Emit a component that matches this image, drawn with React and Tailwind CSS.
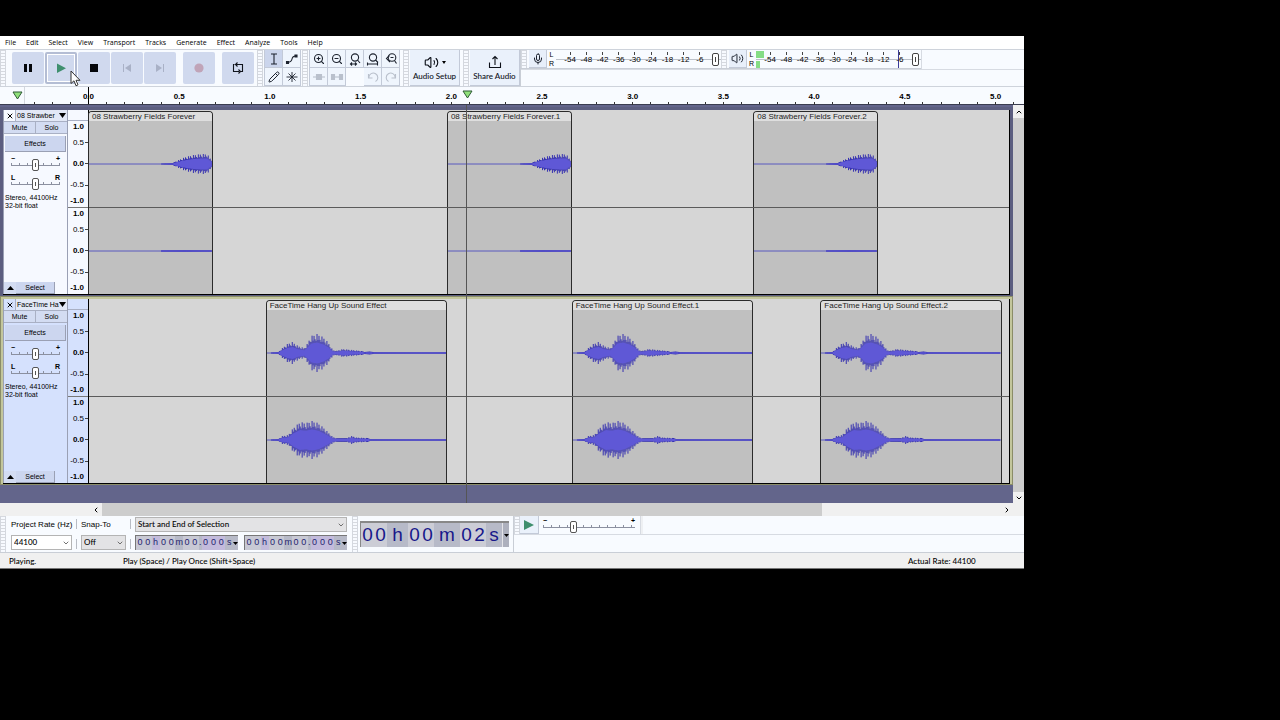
import {
	ChevronDown,
	ChevronLeft,
	ChevronRight,
	ChevronUp,
	Mic,
	Pencil,
	Volume2,
	X,
	ZoomIn,
	ZoomOut,
} from 'lucide-react';
import clsx from 'clsx';

const VIEW_SECONDS = 5.075;
const PLAYHEAD = 2.08;
const HUMANIST = "font-['Lato',sans-serif] font-medium";

const MENUS = [
	'File',
	'Edit',
	'Select',
	'View',
	'Transport',
	'Tracks',
	'Generate',
	'Effect',
	'Analyze',
	'Tools',
	'Help',
];

const DECIBELS = [ -54, -48, -42, -36, -30, -24, -18, -12, -6 ];

// Envelopes are [ x, half height ] pairs in clip pixels.
const SWELL = [ [ 73, 0.5 ], [ 84, 1 ], [ 90, 4 ], [ 97, 7 ], [ 105, 9 ], [ 113, 10 ], [ 119, 10 ], [ 121, 7 ], [ 124, 3 ] ];
const FLAT = [ [ 73, 0.8 ], [ 124, 0.8 ] ];
const HANGUP_LEFT = [
	[ 4, 0.5 ], [ 11, 1 ], [ 15, 5 ], [ 20, 9 ], [ 25, 11 ], [ 31, 7 ], [ 37, 5 ], [ 40, 9 ],
	[ 44, 17 ], [ 50, 19 ], [ 56, 16 ], [ 61, 11 ], [ 66, 3 ], [ 69, 2 ], [ 76, 4 ], [ 86, 3 ],
	[ 95, 2 ], [ 98, 1 ], [ 103, 1.5 ], [ 108, 0.8 ], [ 181, 0.8 ],
];
const HANGUP_RIGHT = [
	[ 4, 0.5 ], [ 11, 1 ], [ 15, 4 ], [ 21, 5 ], [ 26, 12 ], [ 33, 18 ], [ 39, 17 ], [ 45, 19 ],
	[ 51, 17 ], [ 57, 12 ], [ 62, 7 ], [ 66, 3 ], [ 70, 2 ], [ 80, 2 ], [ 85, 4 ], [ 90, 2.5 ],
	[ 101, 2 ], [ 104, 0.8 ], [ 181, 0.8 ],
];

const TRACKS = [
	{
		name: '08 Strawber',
		title: '08 Strawberry Fields Forever',
		starts: [ 0, 1.98, 3.67 ],
		length: 0.688,
		pixels: 124,
		waves: [ SWELL, FLAT ],
	},
	{
		name: 'FaceTime Ha',
		title: 'FaceTime Hang Up Sound Effect',
		starts: [ 0.98, 2.668, 4.04 ],
		length: 1,
		pixels: 181,
		waves: [ HANGUP_LEFT, HANGUP_RIGHT ],
		focused: true,
	},
];

const percent = ( seconds ) => `${ ( seconds / VIEW_SECONDS ) * 100 }%`;

const envelopeAt = ( points, x ) => {
	const next = points.findIndex( ( point ) => point[ 0 ] >= x );
	if ( next < 1 ) {
		return next === 0 && points[ 0 ][ 0 ] === x ? points[ 0 ][ 1 ] : 0;
	}
	const [ x0, y0 ] = points[ next - 1 ];
	const [ x1, y1 ] = points[ next ];
	return y0 + ( ( y1 - y0 ) * ( x - x0 ) ) / ( x1 - x0 );
};

const wavePath = ( points, pixels, scale, spiky ) => {
	let d = '';
	for ( let x = 0; x < pixels; x++ ) {
		const base = envelopeAt( points, x ) * scale;
		const dip = spiky && base > 2 ? [ 1, 0.7, 0.95, 0.75, 0.65 ][ x % 5 ] : 1;
		const dipLow = spiky && base > 2 ? [ 0.65, 1, 0.7, 0.9, 0.75 ][ ( x + 1 ) % 5 ] : 1;
		d += `M${ x + 0.5 } ${ 43 - base * dip }V${ 43 + base * dipLow }`;
	}
	return d;
};

const Wave = ( { points, pixels } ) => (
	<svg
		className="block h-full w-full"
		viewBox={ `0 0 ${ pixels } 86` }
		preserveAspectRatio="none"
		aria-hidden="true"
	>
		<path d={ `M0 43H${ pixels }` } stroke="#5a5ac0" strokeWidth="1" />
		<path d={ wavePath( points, pixels, 1, true ) } stroke="#342fb0" strokeWidth="1" />
		<path d={ wavePath( points, pixels, 0.55, false ) } stroke="#5f58d6" strokeWidth="1.2" />
	</svg>
);

const Grip = () => (
	<div className="w-[6px] shrink-0 self-stretch border-x border-[#d3d7de] bg-[repeating-linear-gradient(#d6d9df_0_1px,#f7faff_1px_3px)]" />
);

const TransportButton = ( { label, pressed, children } ) => (
	<button
		type="button"
		aria-label={ label }
		className={ clsx(
			'flex h-8 w-8 items-center justify-center rounded-xs bg-[#d0d9ee]',
			pressed && 'border-2 border-[#b4bdd4] ring-1 ring-inset ring-white'
		) }
	>
		<svg viewBox="0 0 16 16" className="h-4 w-4 shrink-0" aria-hidden="true">
			{ children }
		</svg>
	</button>
);

const ToolButton = ( { label, active, blank, children } ) => (
	<button
		type="button"
		aria-label={ label }
		className={ clsx(
			'flex h-[18px] w-[18px] items-center justify-center border-r border-b border-[#c3cad8]',
			active ? 'bg-[#cbd5ec]' : 'bg-[#eff5fd]',
			blank ? 'text-[#b9c0cc]' : 'text-[#1c222e]'
		) }
	>
		{ children }
	</button>
);

const Glyph = ( { children } ) => (
	<svg
		viewBox="0 0 14 14"
		className="h-[14px] w-[14px] shrink-0"
		fill="none"
		stroke="currentColor"
		strokeWidth="1.1"
		aria-hidden="true"
	>
		{ children }
	</svg>
);

const Transport = () => (
	<div className="flex items-center gap-px pr-[2px] pl-[6px]">
		<TransportButton label="Pause">
			<path d="M4 4h3v8H4zM9 4h3v8H9z" fill="#05070b" />
		</TransportButton>
		<TransportButton label="Play" pressed>
			<path d="M4 3.5L13 8.2L4 13z" fill="#3f8f6e" />
		</TransportButton>
		<TransportButton label="Stop">
			<path d="M4 4h8v8H4z" fill="#05070b" />
		</TransportButton>
		<TransportButton label="Skip to Start">
			<path d="M4 4h1v8H4zM12 4v8L6 8z" fill="#a9b1c6" />
		</TransportButton>
		<TransportButton label="Skip to End">
			<path d="M4 4l6 4-6 4zM11 4h1v8h-1z" fill="#a9b1c6" />
		</TransportButton>
		<div className="px-[6px]">
			<TransportButton label="Record">
				<circle cx="8" cy="8" r="4.6" fill="#c0a4b8" />
			</TransportButton>
		</div>
		<TransportButton label="Loop">
			<g fill="none" stroke="#10141c" strokeWidth="1.1">
				<path d="M5.5 4.5H12.5V11.5H10.5M9.5 11.5H3.5V4.5H4.5" />
				<path d="M7.500 2.500L5.500 4.500L7.500 6.500M8.500 9.500L10.500 11.500L8.500 13.500" />
			</g>
		</TransportButton>
	</div>
);

const EditTools = () => (
	<div className="grid grid-cols-2 self-start border-l border-[#c3cad8]">
		<ToolButton label="Selection Tool" active>
			<Glyph><path d="M4 2h6M4 12h6M7 2v10" /></Glyph>
		</ToolButton>
		<ToolButton label="Envelope Tool">
			<Glyph>
				<path d="M2.5 10.5Q6.5 10 7 7t4-3" />
				<path d="M1.5 9.5h2v2h-2zM10 3h2v2h-2z" fill="currentColor" />
			</Glyph>
		</ToolButton>
		<ToolButton label="Draw Tool">
			<Pencil size={ 12 } strokeWidth={ 2 } />
		</ToolButton>
		<ToolButton label="Multi-Tool">
			<Glyph><path d="M7 2v10M1.5 7h11M3.5 3.5l7 7M10.5 3.5l-7 7" strokeWidth="0.9" /></Glyph>
		</ToolButton>
	</div>
);

const ZoomTools = () => (
	<div className="grid grid-cols-5 self-start border-l border-[#c3cad8]">
		<ToolButton label="Zoom In"><ZoomIn size={ 12 } strokeWidth={ 2.2 } /></ToolButton>
		<ToolButton label="Zoom Out"><ZoomOut size={ 12 } strokeWidth={ 2.2 } /></ToolButton>
		<ToolButton label="Fit Selection to Width">
			<Glyph>
				<circle cx="7" cy="5.5" r="3.6" />
				<path d="M9.5 8l2.5 3M2.5 12h6M4 10.5L2.5 12l1.500 1.500M7 10.500l1.500 1.500-1.500 1.500" />
			</Glyph>
		</ToolButton>
		<ToolButton label="Fit Project to Width">
			<Glyph>
				<circle cx="7" cy="5.5" r="3.6" />
				<path d="M9.5 8l2.5 2.5M1.5 12h10M1.5 10.5v3M11.5 10.5v3" />
			</Glyph>
		</ToolButton>
		<ToolButton label="Zoom Toggle">
			<Glyph>
				<circle cx="8" cy="5.5" r="3.8" />
				<path d="M10.5 8.5l2 3M5.5 3.5L2.500 6.500l3.500 3.500M6.500 5.500h3" />
			</Glyph>
		</ToolButton>
		<ToolButton label="Trim Audio" blank>
			<Glyph><path d="M1 7h12" /><path d="M4.5 4.5h5v5h-5z" fill="currentColor" /></Glyph>
		</ToolButton>
		<ToolButton label="Silence Audio" blank>
			<Glyph><path d="M1.5 4.5h3v5h-3zM9.5 4.5h3v5h-3z" fill="currentColor" /><path d="M4 7h6" /></Glyph>
		</ToolButton>
		<div />
		<ToolButton label="Undo" blank>
			<Glyph><path d="M2.5 4v4h4M2.8 7.5A4.5 4.5 0 1 1 9.5 11.5" /></Glyph>
		</ToolButton>
		<ToolButton label="Redo" blank>
			<Glyph><path d="M11.5 4v4h-4M11.2 7.5A4.5 4.5 0 1 0 4.5 11.5" /></Glyph>
		</ToolButton>
	</div>
);

const BigButton = ( { label, children } ) => (
	<button
		type="button"
		className={ clsx(
			'flex w-[50px] flex-col items-center justify-between border-r border-b border-[#c3cad8] bg-[#eaf1fb] pt-[5px] pb-[4px] text-[8px] leading-[10px] whitespace-nowrap text-[#0c1018]',
			HUMANIST
		) }
	>
		<span className="flex h-[14px] items-center gap-[3px]">{ children }</span>
		{ label }
	</button>
);

const Meter = ( { label, icon, playing } ) => (
	<div className="flex h-[19px] w-[200px] items-stretch border-b border-[#c9ced6]">
		<Grip />
		<button
			type="button"
			aria-label={ label }
			className="ml-[2px] flex w-[18px] items-center justify-center border-r border-b border-[#c3cad8] bg-[#e8effa] text-[#1c222e]"
		>
			{ icon }
		</button>
		<div className="flex w-[9px] flex-col items-center justify-between text-[7px] leading-[9px]">
			<span>L</span>
			<span>R</span>
		</div>
		<div className="relative flex flex-1 items-center">
			<div className="absolute inset-x-0 top-[9px] h-px bg-[#bcc1c9]" />
			{ playing && (
				<>
					<div className="absolute top-px left-0 h-[7px] w-[8px] bg-[#85dd85]" />
					<div className="absolute top-[11px] left-0 h-[7px] w-[4px] bg-[#85dd85]" />
					<div className="absolute inset-y-0 right-[22px] w-px bg-[#3b3b98]" />
				</>
			) }
			<div className="relative ml-[6px] flex w-[146px] text-[8px] leading-[9px]">
				{ DECIBELS.map( ( db ) => (
					<span key={ db } className="flex w-0 flex-1 flex-col items-center">
						<span className="h-[3px] w-px bg-[#444]" />
						<span>{ db }</span>
						<span className="h-[3px]" />
					</span>
				) ) }
			</div>
			<span className="relative ml-[4px] h-[13px] w-[7px] rounded-xs border border-[#444] bg-white">
				<span className="absolute top-[3px] left-[2px] h-[5px] w-px bg-[#444]" />
			</span>
		</div>
	</div>
);

const Toolbar = () => (
	<div className="flex h-[38px] items-stretch border-y border-[#ced3db]">
		<Grip />
		<Transport />
		<div className="flex gap-px pl-px">
			<Grip />
			<EditTools />
		</div>
		<div className="flex gap-px pl-px">
			<Grip />
			<ZoomTools />
		</div>
		<div className="flex gap-px pl-[3px]">
			<Grip />
			<BigButton label="Audio Setup">
				<Volume2 size={ 15 } strokeWidth={ 1.8 } />
				<svg viewBox="0 0 4 3" className="h-[3px] w-[4px]" aria-hidden="true"><path d="M0 0h4L2 3z" /></svg>
			</BigButton>
		</div>
		<div className="flex gap-px pl-[3px]">
			<Grip />
			<BigButton label="Share Audio">
				<Glyph><path d="M1.5 7.5v5h11v-5M7 10V1.5M4.5 4L7 1.5L9.5 4" /></Glyph>
			</BigButton>
		</div>
		<div className="flex min-w-0 flex-1 flex-col border-l border-[#c9ced6]">
			<div className="flex border-b border-[#d7dbe2]">
				<Meter label="Record Meter" icon={ <Mic size={ 12 } strokeWidth={ 2 } /> } />
				<Meter label="Playback Meter" icon={ <Volume2 size={ 13 } strokeWidth={ 1.8 } /> } playing />
				<div className="border-l border-[#d7dbe2]" />
			</div>
		</div>
	</div>
);

const GreenMarker = () => (
	<svg viewBox="0 0 11 9" className="h-[9px] w-[11px] shrink-0" aria-hidden="true">
		<path d="M1 1h9L5.5 8z" fill="#8fe07a" stroke="#2f5a36" />
	</svg>
);

const Timeline = () => (
	<div className="relative flex h-[18px] border-b border-[#3a3c50] pr-px">
		<button
			type="button"
			aria-label="Pinned Play Head"
			className="flex w-[25px] items-center justify-center border-r border-[#d3d7de] pl-[10px]"
		>
			<GreenMarker />
		</button>
		{ Array.from( { length: 55 }, ( _, i ) => i - 3 ).map( ( tenth ) => {
			const major = tenth >= 0 && tenth % 5 === 0;
			return (
				<div
					key={ tenth }
					className="relative flex w-0 flex-1 flex-col items-center justify-between pt-[5px] text-[8px] leading-[10px] font-bold whitespace-nowrap"
				>
					<span>{ major ? ( tenth / 10 ).toFixed( 1 ) : '' }</span>
					<span className={ clsx( 'w-px shrink-0 bg-[#333]', major ? 'h-[3px]' : 'h-[2px]' ) } />
					{ tenth === 0 && <span className="absolute inset-y-0 w-px bg-black" /> }
				</div>
			);
		} ) }
		<div className="pointer-events-none absolute top-[3px] right-[15px] left-[82px]">
			<div style={ { paddingLeft: percent( PLAYHEAD ) } }>
				<GreenMarker />
			</div>
		</div>
	</div>
);

const RANGE =
	'block h-[12px] w-full appearance-none bg-[linear-gradient(#8b90a0,#8b90a0),repeating-linear-gradient(90deg,#8b90a0_0_1px,transparent_1px_8px)] bg-[length:100%_1px,100%_3px] bg-[position:0_6px,0_4px] bg-no-repeat [&::-webkit-slider-thumb]:h-[12px] [&::-webkit-slider-thumb]:w-[7px] [&::-webkit-slider-thumb]:appearance-none [&::-webkit-slider-thumb]:rounded-xs [&::-webkit-slider-thumb]:border [&::-webkit-slider-thumb]:border-[#555] [&::-webkit-slider-thumb]:bg-[linear-gradient(#555,#555)] [&::-webkit-slider-thumb]:bg-[length:1px_4px] [&::-webkit-slider-thumb]:bg-center [&::-webkit-slider-thumb]:bg-no-repeat [&::-webkit-slider-thumb]:bg-white';

const LabelledRange = ( { label, low, high, value, className } ) => (
	<label className={ clsx( 'flex h-[19px] flex-col', className ) }>
		<span className="flex h-[3px] justify-between text-[7px] leading-[6px] font-bold">
			<span>{ low }</span>
			<span>{ high }</span>
		</span>
		<input
			type="range"
			aria-label={ label }
			min="0"
			max="100"
			defaultValue={ value }
			className={ RANGE }
		/>
	</label>
);

const TrackPanel = ( { name, focused } ) => (
	<div
		className={ clsx(
			'flex w-[65px] shrink-0 flex-col border-x border-[#9aa0b4] text-[7px] leading-[8px]',
			focused ? 'bg-[#d5e1fd]' : 'bg-[#f6f9ff]'
		) }
	>
		<div className="flex h-[12px] border-b border-[#a9b0c4]">
			<button type="button" aria-label="Close track" className="flex w-[12px] items-center justify-center border-r border-[#a9b0c4]">
				<X size={ 8 } strokeWidth={ 3 } />
			</button>
			<button type="button" className="flex flex-1 items-center justify-between overflow-hidden bg-[#e2e8f6] px-px whitespace-nowrap">
				{ name }
				<svg viewBox="0 0 7 5" className="h-[5px] w-[7px] shrink-0" aria-hidden="true"><path d="M0 0h7L3.5 5z" /></svg>
			</button>
		</div>
		<div className="flex h-[12px] border-b border-[#a9b0c4] bg-[#d3dcf2]">
			<button type="button" className="flex-1 border-r border-[#a9b0c4]">Mute</button>
			<button type="button" className="flex-1">Solo</button>
		</div>
		<button type="button" className="mx-px mt-[2px] mb-[4px] h-[16px] border-r border-b border-[#9aa0b4] bg-[#ccd6ef]">
			Effects
		</button>
		<LabelledRange label="Gain" low="−" high="+" value="50" className="px-[7px]" />
		<LabelledRange label="Pan" low="L" high="R" value="50" className="px-[7px]" />
		<p className="pl-px whitespace-nowrap">
			Stereo, 44100Hz
			<br />
			32-bit float
		</p>
		<div className="mt-auto flex h-[12px]">
			<button type="button" aria-label="Collapse" className="flex w-[12px] items-center justify-center bg-[#d3dcf2]">
				<svg viewBox="0 0 7 4" className="h-[4px] w-[7px]" aria-hidden="true"><path d="M0 4h7L3.5 0z" /></svg>
			</button>
			<button type="button" className="w-[39px] border-r border-b border-[#9aa0b4] bg-[#ccd6ef]">Select</button>
		</div>
	</div>
);

const Scale = () => (
	<div className="flex flex-1 flex-col">
		{ [ '1.0', '0.5', '0.0', '-0.5', '-1.0' ].map( ( value, i ) => (
			<span
				key={ value }
				className={ clsx(
					'flex items-center justify-end gap-px text-[8px]',
					i % 4 === 0 ? 'h-[11px]' : 'flex-1',
					i % 2 === 0 && 'font-bold'
				) }
			>
				{ value }
				<span className={ clsx( 'h-px w-[3px]', i % 4 !== 0 && 'bg-[#444]' ) } />
			</span>
		) ) }
	</div>
);

const Clip = ( { title, start, track } ) => (
	<section
		className="absolute top-px bottom-0 -ml-px flex flex-col overflow-hidden rounded-t-[4px] border-x border-t border-[#2b2b2b] bg-[#c0c0c0]"
		style={ { left: percent( start ), width: percent( track.length ) } }
	>
		<h3 className="h-[9px] bg-[#dedede] pl-[3px] text-[8px] leading-[9px] whitespace-nowrap text-[#1d1d1d]">
			{ title }
		</h3>
		<div className="flex min-h-0 flex-1 flex-col gap-px">
			{ track.waves.map( ( points, i ) => (
				<div key={ i } className="h-0 flex-1">
					<Wave points={ points } pixels={ track.pixels } />
				</div>
			) ) }
		</div>
	</section>
);

const Track = ( { track } ) => (
	<article
		className={ clsx(
			'px-[3px] pt-[3px] pb-px',
			track.focused ? 'bg-[#c3c69c] inset-ring inset-ring-[#8b8d68]' : 'bg-[#5c5e80]'
		) }
	>
		<div className="flex h-[185px] border-r border-b border-black">
			<TrackPanel name={ track.name } focused={ track.focused } />
			<div
				className={ clsx(
					'flex w-[21px] shrink-0 flex-col border-r border-black',
					track.focused ? 'bg-[#d5e1fd]' : 'bg-[#f6f9ff]'
				) }
			>
				<div className="h-[11px] border-b border-[#a9b0c4]" />
				<Scale />
				<div className="h-px bg-[#777]" />
				<Scale />
			</div>
			<div className="relative flex flex-1 flex-col bg-[#d6d6d6]">
				{ track.starts.map( ( start, i ) => (
					<Clip
						key={ start }
						title={ i ? `${ track.title }.${ i }` : track.title }
						start={ start }
						track={ track }
					/>
				) ) }
				<div className="h-[11px]" />
				<div className="flex-1" />
				<div className="relative h-px bg-[#5b5b5b]" />
				<div className="flex-1" />
			</div>
		</div>
	</article>
);

const TrackArea = () => (
	<div className="flex">
		<main className="relative min-w-0 flex-1 bg-[#63658b] pt-[2px] pb-[18px]">
			{ TRACKS.map( ( track ) => (
				<Track key={ track.name } track={ track } />
			) ) }
			<div className="pointer-events-none absolute inset-y-0 right-[4px] left-[89px]">
				<div className="h-full border-l border-[#555]" style={ { marginLeft: percent( PLAYHEAD ) } } />
			</div>
		</main>
		<div className="flex w-[11px] flex-col items-center bg-[#f0f0f0]">
			<button type="button" aria-label="Scroll up" className="flex h-[13px] items-center">
				<ChevronUp size={ 8 } strokeWidth={ 3 } />
			</button>
			<div className="w-full flex-1 bg-[#cdcdcd]" />
			<button type="button" aria-label="Scroll down" className="flex h-[11px] items-center">
				<ChevronDown size={ 8 } strokeWidth={ 3 } />
			</button>
		</div>
	</div>
);

const HorizontalScroll = () => (
	<div className="flex h-[13px] items-center bg-[#f0f0f0] pr-[12px] pl-[90px]">
		<button type="button" aria-label="Scroll left" className="flex w-[12px] justify-center">
			<ChevronLeft size={ 8 } strokeWidth={ 3 } />
		</button>
		<div className="flex-1 self-stretch">
			<div className="h-full w-4/5 bg-[#cdcdcd]" />
		</div>
		<button type="button" aria-label="Scroll right" className="flex w-[10px] justify-center">
			<ChevronRight size={ 8 } strokeWidth={ 3 } />
		</button>
	</div>
);

const CELL_COLORS = {
	light: 'bg-[#c8c9d4]',
	unit: 'bg-[#b7bac8]',
	violet: 'bg-[#c3bbdc]',
};

const SMALL_CELLS = [
	[ '0', 'light' ], [ '0', 'light' ], [ 'h', 'violet' ], [ '0', 'light' ], [ '0', 'light' ], [ 'm', 'unit' ],
	[ '0', 'light' ], [ '0', 'light' ], [ '.', 'unit' ], [ '0', 'violet' ], [ '0', 'violet' ], [ '0', 'violet' ], [ 's', 'unit' ],
];

const DropArrow = () => (
	<svg viewBox="0 0 5 3" className="h-[3px] w-[5px]" aria-hidden="true"><path d="M0 0h5L2.5 3z" /></svg>
);

const TimeBox = ( { label } ) => (
	<div
		role="group"
		aria-label={ label }
		className="flex h-[15px] w-[103px] border-t border-l border-[#777] text-[9px] text-[#23236e]"
	>
		{ SMALL_CELLS.map( ( [ value, tone ], i ) =>
			value === '0' ? (
				<input
					key={ i }
					aria-label={ `${ label } digit ${ i + 1 }` }
					defaultValue={ value }
					className={ clsx( 'w-[8px] min-w-0 text-center', CELL_COLORS[ tone ] ) }
				/>
			) : (
				<span
					key={ i }
					className={ clsx(
						'flex items-center justify-center',
						value === '.' ? 'w-[3px]' : 'w-[8px]',
						CELL_COLORS[ tone ]
					) }
				>
					{ value }
				</span>
			)
		) }
		<button type="button" aria-label={ `${ label } format` } className="flex flex-1 items-center justify-center bg-[#b7bac8]">
			<DropArrow />
		</button>
	</div>
);

const BIG_CELLS = [
	[ '0' ], [ '0' ], [ 'h', 'w-[21px]' ], [ '0' ], [ '0' ], [ 'm', 'w-[26px]' ], [ '0' ], [ '2' ], [ 's', 'w-[16px]' ],
];

const AudioPosition = () => (
	<div
		role="group"
		aria-label="Audio Position"
		className="flex h-[26px] w-[149px] border-t-2 border-l border-[#888] text-[19px] text-[#17178a]"
	>
		{ BIG_CELLS.map( ( [ value, width ], i ) =>
			width ? (
				<span key={ i } className={ clsx( 'flex items-center justify-center bg-[#b7bac8]', width ) }>
					{ value }
				</span>
			) : (
				<input
					key={ i }
					aria-label={ `Position digit ${ i + 1 }` }
					defaultValue={ value }
					className="w-[13px] bg-[#cccdd6] text-center"
				/>
			)
		) }
		<button type="button" aria-label="Position format" className="flex flex-1 items-center justify-center border-l border-[#e4e4e8] bg-[#adb0bd]">
			<DropArrow />
		</button>
	</div>
);

const Dropdown = ( { id, label, options } ) => (
	<div className="relative">
		<select
			id={ id }
			aria-label={ label }
			className={ clsx(
				'block h-[15px] w-full appearance-none border border-[#b4b4b4] pl-[2px] text-[8px] leading-[13px]',
				HUMANIST,
				id === 'project-rate' ? 'bg-white' : 'bg-[#e3e3e5]'
			) }
		>
			{ options.map( ( option ) => (
				<option key={ option }>{ option }</option>
			) ) }
		</select>
		<ChevronDown size={ 8 } strokeWidth={ 2.5 } className="pointer-events-none absolute top-[4px] right-[2px] text-[#555]" />
	</div>
);

const Divider = () => (
	<div className="flex flex-col justify-between py-[3px]">
		<span className="h-[10px] w-px bg-[#b8bcc4]" />
		<span className="h-[10px] w-px bg-[#b8bcc4]" />
	</div>
);

const SelectionBar = () => (
	<div className="flex h-[37px] items-stretch border-b border-[#c9ced6]">
		<Grip />
		<div className="flex gap-[4px] px-[5px]">
			<div className="flex w-[61px] flex-col justify-between pt-[4px] pb-[2px]">
				<label htmlFor="project-rate" className="text-[8px] leading-[10px] whitespace-nowrap">
					Project Rate (Hz)
				</label>
				<Dropdown id="project-rate" options={ [ '44100' ] } />
			</div>
			<Divider />
			<div className="flex w-[45px] flex-col justify-between pt-[4px] pb-[2px]">
				<label htmlFor="snap-to" className="text-[8px] leading-[10px]">
					Snap-To
				</label>
				<Dropdown id="snap-to" options={ [ 'Off' ] } />
			</div>
			<Divider />
			<div className="flex w-[212px] flex-col justify-between pt-px pb-[2px]">
				<Dropdown id="selection-mode" label="Selection mode" options={ [ 'Start and End of Selection' ] } />
				<div className="flex justify-between">
					<TimeBox label="Selection Start" />
					<TimeBox label="Selection End" />
				</div>
			</div>
		</div>
		<Grip />
		<div className="flex items-center border-r border-[#c9ced6] pr-[4px] pl-[2px]">
			<AudioPosition />
		</div>
		<div className="flex-1">
			<div className="flex h-[19px] items-stretch border-b border-[#d7dbe2]">
				<Grip />
				<button type="button" aria-label="Play at Speed" className="flex w-[19px] items-center justify-center border-r border-b border-[#c3cad8] bg-[#eaf1fb]">
					<svg viewBox="0 0 10 10" className="h-[10px] w-[10px]" aria-hidden="true"><path d="M0 0L10 5L0 10z" fill="#3f8f6e" /></svg>
				</button>
				<LabelledRange label="Playback Speed" low="−" high="+" value="32" className="ml-[4px] w-[92px] pt-[2px]" />
				<div className="ml-[5px] w-[3px] border-l border-[#d7dbe2] bg-[#eef0f3]" />
			</div>
		</div>
	</div>
);

const StatusBar = () => (
	<footer className={ clsx( 'flex h-[16px] items-center border-b border-[#777] bg-[#f0f0f0] text-[8px] leading-[10px]', HUMANIST ) }>
		<span className="w-[12%] pl-[9px]">Playing.</span>
		<span className="flex-1">Play (Space) / Play Once (Shift+Space)</span>
		<span className="w-[116px]">Actual Rate: 44100</span>
	</footer>
);

const App = () => (
	<div className="min-h-screen bg-black pt-9 font-['Liberation_Sans',sans-serif] text-black">
		<div className="w-4/5 bg-[#f8fbff]">
			<nav className="flex h-[13px] items-center bg-white font-['Open_Sans',sans-serif] text-[7px] leading-[10px] font-medium">
				{ MENUS.map( ( menu ) => (
					<button key={ menu } type="button" className="px-[5px]">
						{ menu }
					</button>
				) ) }
			</nav>
			<div className="relative">
				<Toolbar />
				<svg viewBox="0 0 11 17" className="absolute top-[21px] left-[70px] h-[17px] w-[11px]" aria-hidden="true">
					<path d="M1 1v12.5l3-2.7 2 5 2-1-2-4.5h4z" fill="#fff" stroke="#333" strokeWidth="1" />
				</svg>
			</div>
			<Timeline />
			<TrackArea />
			<HorizontalScroll />
			<SelectionBar />
			<StatusBar />
		</div>
	</div>
);

export default App;
